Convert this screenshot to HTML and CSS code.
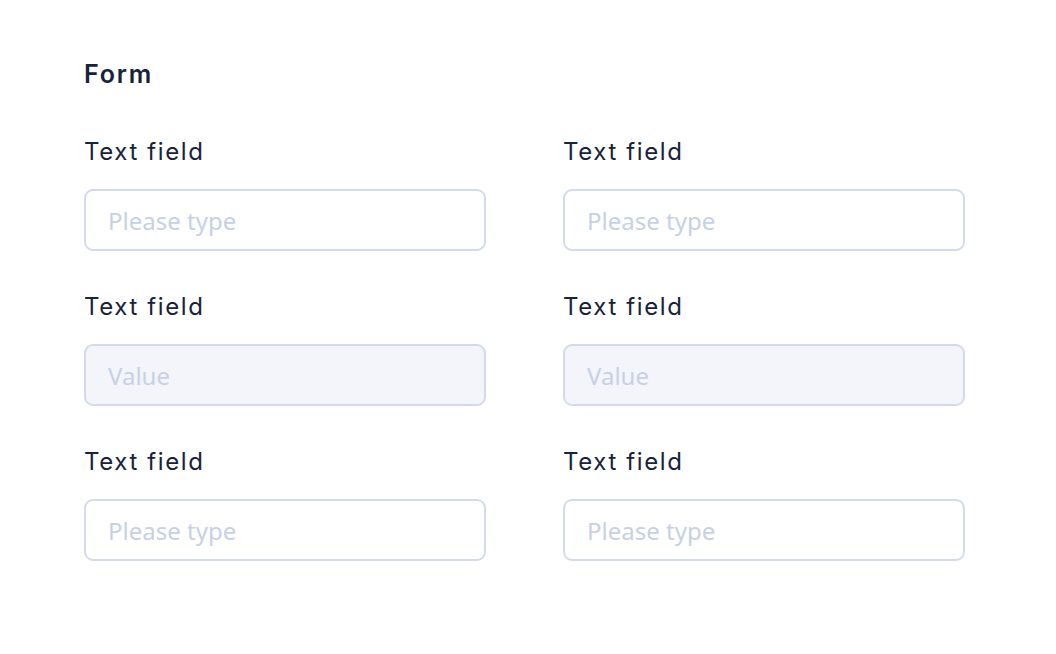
FILE: index.html
```html
<!DOCTYPE html>
<html lang="en">
<head>
<meta charset="UTF-8">
<title>Form</title>
<link rel="stylesheet" href="styles.css">
</head>
<body>
<div class="page">
  <div class="title">Form</div>
  <form class="formGrid">
    <div class="field">
      <label for="f1">Text field</label>
      <input type="text" id="f1" placeholder="Please type">
    </div>
    <div class="field">
      <label for="f2">Text field</label>
      <input type="text" id="f2" placeholder="Please type">
    </div>
    <div class="field">
      <label for="f3">Text field</label>
      <input type="text" id="f3" placeholder="Value" disabled>
    </div>
    <div class="field">
      <label for="f4">Text field</label>
      <input type="text" id="f4" placeholder="Value" disabled>
    </div>
    <div class="field">
      <label for="f5">Text field</label>
      <input type="text" id="f5" placeholder="Please type">
    </div>
    <div class="field">
      <label for="f6">Text field</label>
      <input type="text" id="f6" placeholder="Please type">
    </div>
  </form>
</div>
</body>
</html>
```

FILE: styles.css
```css
body {
  margin: 0;
  background-color: #fff;
  font-family: Inter, "Noto Sans", sans-serif;
  color: #17223b;
}

.page {
  padding: 58px 84px;
}

.title {
  font-size: 25px;
  line-height: 32px;
  font-weight: 600;
  letter-spacing: 1.8px;
  margin-bottom: 46px;
}

.formGrid {
  display: grid;
  grid-template-columns: 402px 402px;
  column-gap: 77px;
  row-gap: 40px;
}

.field label {
  display: block;
  font-size: 24px;
  line-height: 32px;
  letter-spacing: 1.6px;
  margin-bottom: 21px;
}

.field input {
  display: block;
  box-sizing: border-box;
  width: 100%;
  height: 62px;
  margin: 0;
  padding: 0 22px;
  border: 2px solid #d3dbea;
  border-radius: 9px;
  background-color: #fff;
  font-family: "Noto Sans", sans-serif;
  font-size: 24px;
  color: #17223b;
  outline: none;
}

.field input::placeholder {
  color: #c7d1e4;
}

.field input:disabled {
  background-color: #f3f5fa;
}
```
